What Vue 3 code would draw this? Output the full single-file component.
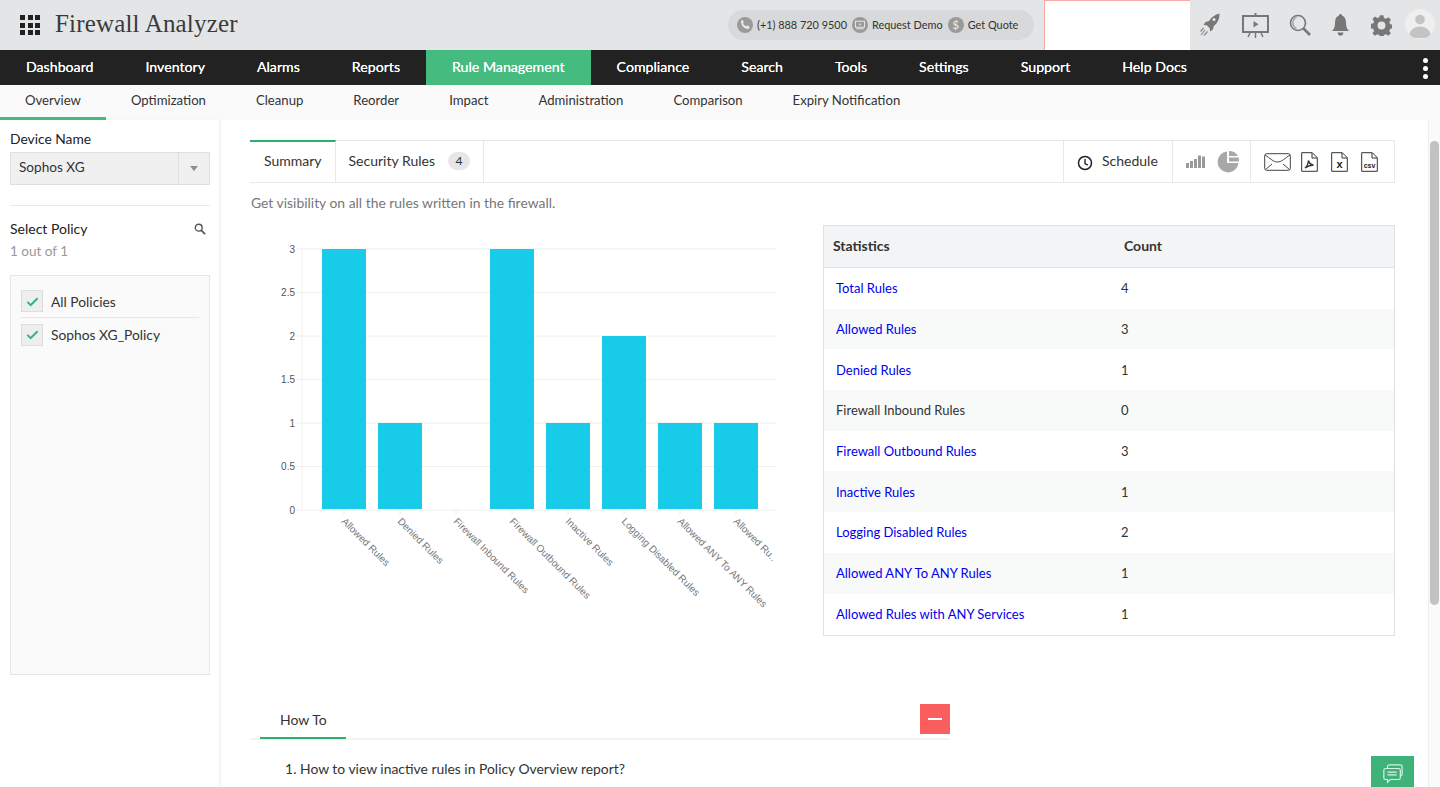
<script setup>
const navItems = ['Dashboard', 'Inventory', 'Alarms', 'Reports', 'Rule Management', 'Compliance', 'Search', 'Tools', 'Settings', 'Support', 'Help Docs']
const subItems = ['Overview', 'Optimization', 'Cleanup', 'Reorder', 'Impact', 'Administration', 'Comparison', 'Expiry Notification']
const policies = ['All Policies', 'Sophos XG_Policy']

const stats = [
  { name: 'Total Rules', count: 4, link: true },
  { name: 'Allowed Rules', count: 3, link: true },
  { name: 'Denied Rules', count: 1, link: true },
  { name: 'Firewall Inbound Rules', count: 0, link: false },
  { name: 'Firewall Outbound Rules', count: 3, link: true },
  { name: 'Inactive Rules', count: 1, link: true },
  { name: 'Logging Disabled Rules', count: 2, link: true },
  { name: 'Allowed ANY To ANY Rules', count: 1, link: true },
  { name: 'Allowed Rules with ANY Services', count: 1, link: true }
]

// chart geometry, y axis 0..3
const chartBars = [
  { label: 'Allowed Rules', value: 3 },
  { label: 'Denied Rules', value: 1 },
  { label: 'Firewall Inbound Rules', value: 0 },
  { label: 'Firewall Outbound Rules', value: 3 },
  { label: 'Inactive Rules', value: 1 },
  { label: 'Logging Disabled Rules', value: 2 },
  { label: 'Allowed ANY To ANY Rules', value: 1 },
  { label: 'Allowed Ru..', value: 1 }
]
const ticks = [0, 0.5, 1, 1.5, 2, 2.5, 3]
const yOf = (v) => 285 - v * 87
</script>

<template>
  <div class="page">
    <header class="top-bar">
      <div class="brand">
        <div class="apps-grid"><i v-for="n in 9" :key="n"></i></div>
        <span class="brand-name">Firewall Analyzer</span>
      </div>
      <div class="contact-pill">
        <span class="pill-icon">
          <svg viewBox="0 0 16 16" width="13" height="13"><path d="M4 2l2 3-1 1.500c.6 1.700 2 3 3.800 3.800L10.300 9l3 2c-.3 1.600-1.300 2.500-2.600 2.500C6.500 13.500 2.500 9.400 2.500 5 2.500 3.500 3 2.500 4 2z" fill="#e8e8e8"/></svg>
        </span>
        <span>(+1) 888 720 9500</span>
        <span class="pill-icon">
          <svg viewBox="0 0 16 16" width="12" height="12"><rect x="2" y="3" width="12" height="8" fill="none" stroke="#e8e8e8" stroke-width="1.300"/><path d="M7 5.500l2.500 1.500L7 8.500z" fill="#e8e8e8"/><path d="M3 13h10" stroke="#e8e8e8" stroke-width="1.300"/></svg>
        </span>
        <span>Request Demo</span>
        <span class="pill-icon dollar">$</span>
        <span>Get Quote</span>
      </div>
      <div class="ad-slot"></div>
      <div class="tool-icons">
        <svg viewBox="0 0 20 23" width="20" height="23" class="rocket"><path d="M19.500 .5C15 1.500 11.500 4 9 8L5.500 9 3.500 12l3.300.3 2.900 3 .4 3.200 2.800-2 .9-3.500c3.500-2.500 5.700-6.500 5.700-12.500z" fill="#777"/><circle cx="14" cy="6.500" r="1.500" fill="#e4e5e7"/><path d="M1 22l4-5M4 22.500l3.500-4M.5 18.500l3-3.500" stroke="#8a8a8a" stroke-width="1.200"/></svg>
        <svg viewBox="0 0 27 25" width="27" height="25" class="present"><path d="M13.500 0v3" stroke="#777" stroke-width="2"/><rect x="1" y="3" width="25" height="16" fill="none" stroke="#777" stroke-width="2"/><path d="M11.500 8l5 3.200-5 3.200z" fill="#777"/><path d="M8 20l-2 4M19 20l2 4M13.500 20v5" stroke="#777" stroke-width="1.500"/></svg>
        <svg viewBox="0 0 22 22" width="22" height="22" class="lens"><circle cx="9" cy="9" r="7.500" fill="none" stroke="#777" stroke-width="1.600"/><path d="M14.500 14.500l6.500 6.500" stroke="#777" stroke-width="2.600"/><path d="M7.500 3.500a6 6 0 0 0 0 11" fill="none" stroke="#9d9d9d" stroke-width="1.300"/></svg>
        <svg viewBox="0 0 17 22" width="17" height="22" class="bell"><path d="M8.500 0C7.600 0 7 .7 7 1.600 4.300 2.500 3 5 3 9c0 4-1 6-3 8h17c-2-2-3-4-3-8 0-4-1.300-6.500-4-7.400C10 .7 9.400 0 8.500 0z" fill="#777"/><path d="M5.500 18.500h6c-.3 2-1.500 3.300-3 3.300s-2.700-1.300-3-3.300z" fill="#777"/></svg>
        <svg viewBox="0 0 24 24" width="21" height="21" class="gear"><path d="M10 0h4l.6 3.200 2.400 1 2.700-1.900 2.900 2.900-1.900 2.700 1 2.400 3 .6v4.100l-3 .5-1 2.500 1.800 2.600-2.900 2.900-2.600-1.800-2.400 1-.6 3.200h-4l-.6-3.200-2.400-1-2.700 1.900-2.900-2.900 1.900-2.700-1-2.400-3.200-.6V10l3.200-.6 1-2.400-1.900-2.700L4.300 1.400l2.700 1.900 2.400-1z" transform="translate(.2 .2)" fill="#777"/><circle cx="12" cy="12" r="4.500" fill="#e4e5e7"/></svg>
        <div class="avatar">
          <svg viewBox="0 0 30 30" width="30" height="30"><circle cx="15" cy="10.500" r="4.800" fill="#c4c4c4"/><path d="M4 29c0-8 5-11.500 11-11.500S26 21 26 29z" fill="#c4c4c4"/></svg>
        </div>
      </div>
    </header>

    <nav class="main-nav">
      <a v-for="item in navItems" :key="item" :class="{ active: item === 'Rule Management' }">{{ item }}</a>
      <div class="kebab"><i></i><i></i><i></i></div>
    </nav>

    <nav class="sub-nav">
      <a v-for="item in subItems" :key="item" :class="{ active: item === 'Overview' }">{{ item }}</a>
    </nav>

    <div class="body-row">
      <aside class="sidebar">
        <div class="field-label">Device Name</div>
        <div class="select-box">
          <span class="select-value">Sophos XG</span>
          <span class="select-arrow"><i></i></span>
        </div>
        <div class="divider"></div>
        <div class="policy-head">
          <span>Select Policy</span>
          <svg viewBox="0 0 14 14" width="12" height="12"><circle cx="5.500" cy="5.500" r="4" fill="none" stroke="#555" stroke-width="1.600"/><path d="M8.500 8.500l4.500 4.500" stroke="#555" stroke-width="2"/></svg>
        </div>
        <div class="policy-count">1 out of 1</div>
        <div class="policy-box">
          <div v-for="p in policies" :key="p" class="policy-row">
            <span class="check">
              <svg viewBox="0 0 14 14" width="13" height="13"><path d="M1.500 7.500l3.500 3.500 7.500-7.500" fill="none" stroke="#26b974" stroke-width="2"/></svg>
            </span>
            <span>{{ p }}</span>
          </div>
        </div>
      </aside>

      <main class="content">
        <div class="tab-bar">
          <div class="tab active">Summary</div>
          <div class="tab second">Security Rules <span class="tab-badge">4</span></div>
          <div class="tab-space"></div>
          <div class="tool-cell schedule">
            <svg viewBox="0 0 16 16" width="16" height="16"><circle cx="8" cy="8" r="6.500" fill="none" stroke="#222" stroke-width="1.500"/><path d="M8 4v4.500l2.800 1.600" fill="none" stroke="#222" stroke-width="1.400"/></svg>
            <span>Schedule</span>
          </div>
          <div class="tool-cell charts">
            <svg viewBox="0 0 20 13" width="20" height="13"><path d="M0 8h3v5H0zM4 6h3v7H4zM8 4h3v9H8zM12 .5h3V13h-3zM16 1.500h3V13h-3z" fill="#999"/></svg>
            <svg viewBox="0 0 22 22" width="22" height="22"><path d="M10 .5a10.500 10.500 0 1 0 11.500 11.500H10z" fill="#a8a8a8"/><path d="M12 0v5h9a10 10 0 0 0-9-5zM12 6.500v4h10a11 11 0 0 0-.4-4z" fill="#a8a8a8"/></svg>
          </div>
          <div class="tool-cell exports">
            <svg viewBox="0 0 27 18" width="27" height="18"><rect x=".7" y=".7" width="25.600" height="16.600" rx="2" fill="none" stroke="#444" stroke-width="1"/><path d="M1 2c5 3 8 7 12.500 7S21 5 26 2M1.500 16.500L8 11M25.500 16.500L19 11" fill="none" stroke="#444" stroke-width="1"/></svg>
            <svg class="first-file" viewBox="0 0 17 20" width="17" height="20"><path d="M.7.7h10.600l5 5v13.600H.7z M11 1v5h5" fill="none" stroke="#333" stroke-width="1"/><path d="M4 16c2-1 3-4 3.500-7.500.5 2.500 1.800 4 5 4.500-3 0-5.500 1-8.500 3z" fill="none" stroke="#333" stroke-width="1.400"/></svg>
            <svg viewBox="0 0 17 20" width="17" height="20"><path d="M.7.7h10.600l5 5v13.600H.7z M11 1v5h5" fill="none" stroke="#333" stroke-width="1"/><text x="8.500" y="16" class="file-text x">x</text></svg>
            <svg viewBox="0 0 17 20" width="17" height="20"><path d="M.7.7h10.600l5 5v13.600H.7z M11 1v5h5" fill="none" stroke="#333" stroke-width="1"/><text x="8.500" y="16" class="file-text">csv</text></svg>
          </div>
        </div>

        <p class="desc">Get visibility on all the rules written in the firewall.</p>

        <div class="report-row">
          <svg class="chart" viewBox="0 0 540 400" width="540" height="400">
            <g v-for="t in ticks" :key="t">
              <path :d="`M46 ${yOf(t)}H526`" stroke="#eceef0" stroke-width="1" fill="none" />
              <text :x="45" :y="yOf(t) + 3.500" class="tick-label" text-anchor="end">{{ t }}</text>
            </g>
            <path d="M52 24V285" stroke="#f1f1f1" fill="none" />
            <g v-for="(b, i) in chartBars" :key="b.label">
              <rect v-if="b.value" :x="72 + i * 56" :y="yOf(b.value)" width="44" :height="b.value * 87 - 1" class="bar" />
              <path :d="`M${94 + i * 56} 285v4`" stroke="#e6e6e6" />
              <text :transform="`translate(${91 + i * 56} 297) rotate(45)`" class="x-label">{{ b.label }}</text>
            </g>
          </svg>

          <div class="stats-table">
            <div class="stats-head">
              <span class="col-name">Statistics</span>
              <span class="col-count">Count</span>
            </div>
            <div v-for="(row, i) in stats" :key="row.name" class="stats-row" :class="{ odd: i % 2 === 1 }">
              <span class="col-name" :class="{ link: row.link }">{{ row.name }}</span>
              <span class="col-count">{{ row.count }}</span>
            </div>
          </div>
        </div>

        <div class="howto">
          <div class="howto-head">
            <span class="howto-tab">How To</span>
            <span class="collapse-btn"><i></i></span>
          </div>
          <ol class="howto-list">
            <li>How to view inactive rules in Policy Overview report?</li>
          </ol>
        </div>
      </main>

      <div class="scroll-track"><div class="scroll-thumb"></div></div>
    </div>

    <div class="chat-btn">
      <svg viewBox="0 0 26 24" width="24" height="22"><rect x="7" y="2" width="16" height="12" rx="2" fill="none" stroke="#d7f1e3" stroke-width="1.300"/><path d="M5 6h14a2 2 0 0 1 2 2v8a2 2 0 0 1-2 2H10l-3 3v-3H5a2 2 0 0 1-2-2V8a2 2 0 0 1 2-2z" fill="#3fb27a" stroke="#d7f1e3" stroke-width="1.300"/><path d="M7 10h10M7 13h10" stroke="#d7f1e3" stroke-width="1.200"/></svg>
    </div>
  </div>
</template>

<style>
html, body {
  margin: 0;
  height: 787px;
  overflow: hidden;
  background: #fff;
}
</style>

<style scoped>
.page {
  width: 1440px;
  height: 787px;
  position: relative;
  overflow: hidden;
  font-family: Lato, "Open Sans", sans-serif;
  color: #222;
  font-size: 14px;
}

.top-bar {
  height: 50px;
  display: flex;
  align-items: center;
  background: #e4e5e7;
}

.brand {
  width: 728px;
  display: flex;
  align-items: center;
  padding-left: 20px;
  box-sizing: border-box;
}

.apps-grid {
  display: grid;
  grid-template-columns: repeat(3, 5px);
  grid-auto-rows: 5px;
  gap: 2.500px;
  width: 20px;
}

.apps-grid i {
  background: #222;
  display: block;
}

.brand-name {
  margin-left: 15px;
  margin-top: -2px;
  font-family: "Liberation Serif", serif;
  font-size: 25px;
  font-weight: 400;
  color: #3a3a3a;
  letter-spacing: 0.17px;
}

.contact-pill {
  width: 306px;
  height: 30px;
  margin-top: -1px;
  border-radius: 15px;
  background: #d8d9db;
  display: flex;
  align-items: center;
  box-sizing: border-box;
  padding-left: 9px;
  font-size: 10.900px;
  color: #333;
  white-space: nowrap;
}

.contact-pill > span:not(.pill-icon) {
  margin: -1px 5px 0 4px;
}

.pill-icon {
  width: 16px;
  height: 16px;
  border-radius: 50%;
  background: #9a9a9a;
  display: inline-flex;
  align-items: center;
  justify-content: center;
  color: #e8e8e8;
  font-size: 12px;
}

.ad-slot {
  width: 146px;
  height: 50px;
  margin-left: 10px;
  box-sizing: border-box;
  background: #fff;
  border-top: 1px solid #f9a9a9;
  border-left: 1px solid #f9a9a9;
}

.tool-icons {
  flex: 1;
  display: flex;
  align-items: center;
  padding-left: 10px;
  height: 100%;
}

.rocket { margin-top: -2px; }
.present { margin-left: 22px; }
.lens { margin-left: 20px; }
.bell { margin-left: 21px; }
.gear { margin-left: 22px; }

.avatar {
  margin-left: 13px;
  margin-top: -2px;
  width: 30px;
  height: 30px;
  border-radius: 50%;
  background: #efefef;
  overflow: hidden;
}

.main-nav {
  height: 35px;
  background: #222;
  display: flex;
  align-items: stretch;
  position: relative;
}

.main-nav a {
  padding: 0 26px;
  line-height: 34px;
  color: #fff;
  font-size: 14.170px;
  text-shadow: 0 0 0.5px #fff;
  white-space: nowrap;
}

.main-nav a.active {
  background: #45bb80;
}

.kebab {
  position: absolute;
  right: 12px;
  top: 8px;
  display: flex;
  flex-direction: column;
  gap: 3px;
}

.kebab i {
  width: 5px;
  height: 5px;
  border-radius: 50%;
  background: #fff;
}

.sub-nav {
  height: 35px;
  background: #fafafa;
  display: flex;
  box-sizing: border-box;
}

.sub-nav a {
  padding: 0 25px;
  line-height: 31px;
  font-size: 13.150px;
  color: #333;
  white-space: nowrap;
  box-sizing: border-box;
}

.sub-nav a.active {
  border-bottom: 3px solid #45bb80;
}

.body-row {
  display: flex;
  height: 667px;
}

.sidebar {
  width: 220px;
  flex: none;
  box-sizing: border-box;
  padding: 10px 9px 0 10px;
  border-right: 1px solid #efefef;
  box-shadow: 1px 0 3px rgba(0, 0, 0, 0.04);
}

.field-label {
  font-size: 13.800px;
  line-height: 18px;
}

.select-box {
  margin-top: 4px;
  height: 33px;
  display: flex;
  background: #f0f0f0;
  border: 1px solid #dfdfdf;
  box-sizing: border-box;
}

.select-value {
  flex: 1;
  padding-left: 8px;
  line-height: 28px;
  font-size: 13.600px;
  color: #333;
}

.select-arrow {
  width: 30px;
  border-left: 1px solid #dfdfdf;
  display: flex;
  align-items: center;
  justify-content: center;
}

.select-arrow i {
  border: 4px solid transparent;
  border-top: 5px solid #8d8d8d;
  border-bottom: 0;
}

.divider {
  height: 1px;
  background: #e8e8e8;
  margin: 20px 0 13px;
}

.policy-head {
  display: flex;
  justify-content: space-between;
  align-items: center;
  font-size: 14px;
  line-height: 20px;
  padding-right: 4px;
}

.policy-count {
  margin-top: 2px;
  color: #999;
  font-size: 13.500px;
  line-height: 20px;
}

.policy-box {
  margin-top: 14px;
  height: 400px;
  box-sizing: border-box;
  background: #fafafa;
  border: 1px solid #e6e6e6;
  padding: 9px 10px;
}

.policy-row {
  display: flex;
  align-items: center;
  gap: 8px;
  height: 33px;
  font-size: 13.800px;
  color: #333;
  border-bottom: 1px solid #e6e6e6;
  box-sizing: border-box;
}

.policy-row:last-child {
  border-bottom: 0;
}

.check {
  width: 22px;
  height: 22px;
  background: #eee;
  border: 1px solid #ddd;
  box-sizing: border-box;
  display: flex;
  align-items: center;
  justify-content: center;
}

.content {
  flex: 1;
  min-width: 0;
  padding: 20px 45px 0 30px;
}

.tab-bar {
  height: 43px;
  display: flex;
  box-sizing: border-box;
  border: 1px solid #e8e8e8;
  border-left: 0;
  align-items: stretch;
}

.tab {
  display: flex;
  align-items: center;
  gap: 13px;
  padding: 0 13px 2px;
  font-size: 14px;
  color: #333;
  border-right: 1px solid #e8e8e8;
}

.tab.active {
  border-top: 2px solid #2fae6e;
  margin-top: -1px;
  padding: 0 13px 3px 14px;
}

.tab-badge {
  width: 22px;
  height: 18px;
  border-radius: 9px;
  background: #e6e6e6;
  font-size: 12px;
  text-align: center;
  line-height: 18px;
}

.tab-space {
  flex: 1;
}

.tool-cell {
  display: flex;
  align-items: center;
  border-left: 1px solid #e8e8e8;
}

.schedule {
  width: 109px;
  box-sizing: border-box;
  padding: 0 0 3px 13px;
  gap: 9px;
  font-size: 14px;
  color: #333;
}

.schedule svg {
  margin-top: 5px;
}

.charts {
  width: 78px;
  box-sizing: border-box;
  padding-left: 13px;
  gap: 11px;
}

.exports {
  width: 144px;
  box-sizing: border-box;
  padding-left: 13px;
  gap: 13px;
}

.first-file {
  margin-left: -3px;
}

.file-text {
  font-family: "Liberation Sans", sans-serif;
  font-size: 7px;
  font-weight: 700;
  text-anchor: middle;
  fill: #222;
}

.file-text.x {
  font-size: 11px;
}

.desc {
  margin: 11px 0 0;
  font-size: 13.900px;
  line-height: 17px;
  padding-left: 1px;
  color: #777;
}

.report-row {
  display: flex;
  margin-top: 14px;
  justify-content: space-between;
}

.chart {
  flex: none;
  display: block;
}

.bar {
  fill: #18cbe9;
}

.tick-label {
  font-family: "Liberation Sans", sans-serif;
  font-size: 10px;
  fill: #555;
}

.x-label {
  font-family: "Liberation Sans", sans-serif;
  font-size: 10px;
  fill: #777;
}

.stats-table {
  width: 572px;
  flex: none;
  height: 411px;
  box-sizing: border-box;
  border: 1px solid #dfe1e3;
  margin-left: auto;
}

.stats-head {
  height: 41px;
  box-sizing: content-box;
  display: flex;
  align-items: center;
  background: #f3f4f6;
  border-bottom: 1px solid #dfe1e3;
  font-weight: 700;
  font-size: 14px;
  color: #333;
  padding-left: 9px;
}

.stats-head span {
  margin-top: -3px;
}

.stats-head .col-name {
  width: 291px;
}

.stats-head .col-count {
  font-weight: 700;
}

.stats-row {
  height: 40.700px;
  display: flex;
  align-items: center;
  padding-left: 12px;
  font-size: 13px;
  color: #333;
}

.stats-row.odd {
  background: #f8f9f9;
}

.stats-row .col-name {
  width: 285px;
}

.link {
  color: #0000ee;
}

.howto {
  margin-top: 68px;
  width: 700px;
}

.howto-head {
  height: 34px;
  display: flex;
  justify-content: space-between;
  align-items: flex-start;
  border-bottom: 2px solid #f3f3f3;
  box-sizing: content-box;
}

.howto-tab {
  margin-left: 10px;
  width: 86px;
  box-sizing: border-box;
  height: 35px;
  padding-left: 20px;
  line-height: 31px;
  font-size: 14px;
  color: #333;
  border-bottom: 2px solid #2fae6e;
}

.collapse-btn {
  width: 30px;
  height: 30px;
  background: #fb5e5f;
  display: flex;
  align-items: center;
  justify-content: center;
}

.collapse-btn i {
  width: 14px;
  height: 1.500px;
  background: #fff;
}

.howto-list {
  margin: 20px 0 0;
  padding-left: 50px;
  font-size: 13.900px;
  line-height: 17px;
  color: #333;
}

.scroll-track {
  width: 12px;
  background: #fafafa;
  border-left: 1px solid #eee;
  box-sizing: border-box;
  padding: 21px 1px 0 1px;
  position: absolute;
  right: 0;
  top: 120px;
  height: 667px;
}

.scroll-thumb {
  width: 9px;
  height: 464px;
  border-radius: 5px;
  background: #c2c2c2;
}

.chat-btn {
  position: absolute;
  left: 1371px;
  top: 756px;
  width: 43px;
  height: 31px;
  background: #3fb27a;
  display: flex;
  justify-content: center;
  padding-top: 7px;
  box-sizing: border-box;
}
</style>
